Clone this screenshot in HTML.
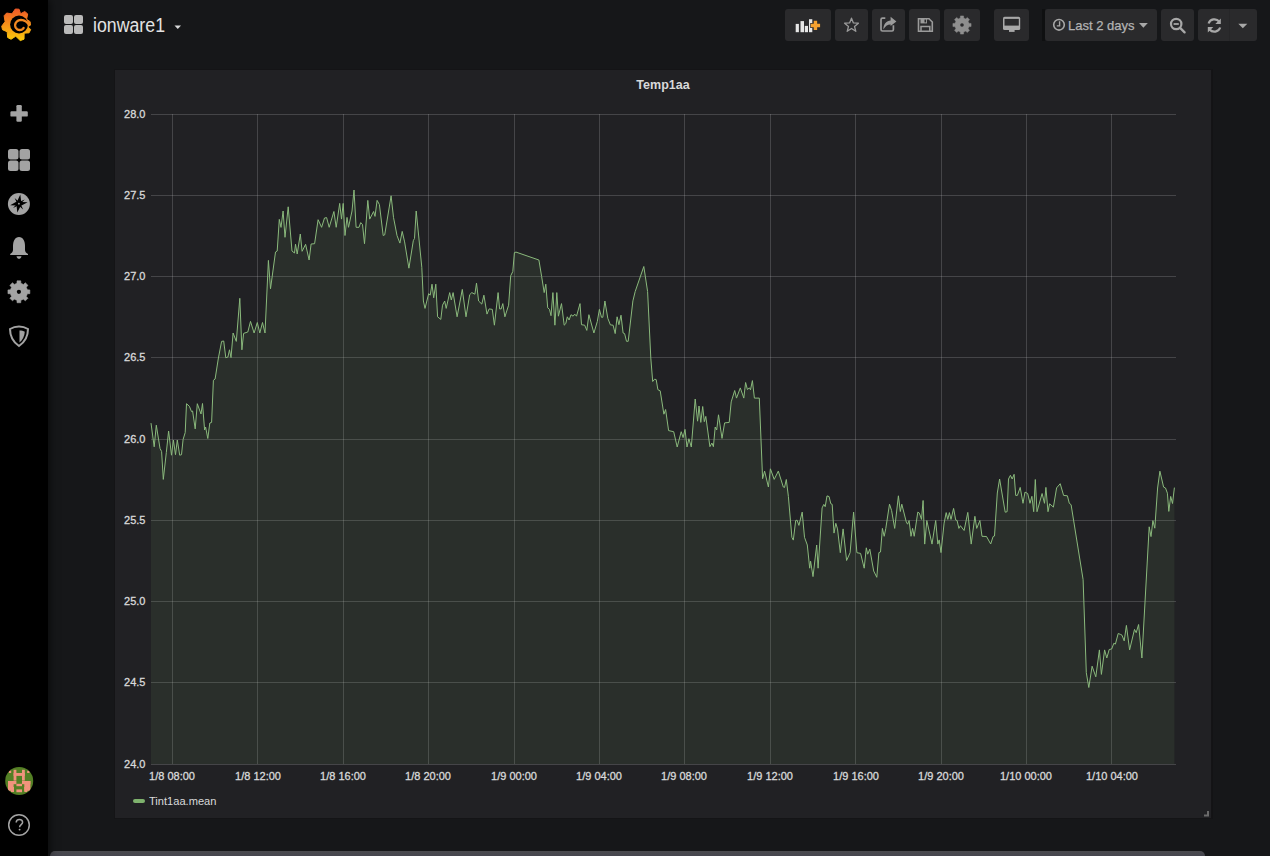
<!DOCTYPE html>
<html><head><meta charset="utf-8">
<style>
html,body{margin:0;padding:0;width:1270px;height:856px;overflow:hidden;background:#161719;font-family:"Liberation Sans",sans-serif;}
.abs{position:absolute;}
#side{position:absolute;left:0;top:0;width:48px;height:856px;background:#000;box-shadow:2px 0 8px rgba(0,0,0,.55);z-index:2;}
.btn{position:absolute;top:9px;height:32px;background:#2a2a2c;border-radius:3px;}
.ylab{position:absolute;width:40px;left:105.5px;-webkit-text-stroke:0.3px #d8d9da;text-align:right;font-size:11px;line-height:11px;color:#d8d9da;}
.xlab{position:absolute;width:100px;-webkit-text-stroke:0.3px #d8d9da;text-align:center;font-size:11px;line-height:11px;color:#d8d9da;white-space:nowrap;}
</style></head>
<body>
<!-- sidebar -->
<div id="side">
<svg width="48" height="856" viewBox="0 0 48 856" style="position:absolute;left:0;top:0">
  <defs>
    <linearGradient id="lg" x1="0" y1="0" x2="0" y2="1">
      <stop offset="0" stop-color="#f05a28"/>
      <stop offset="1" stop-color="#fbca0a"/>
    </linearGradient>
  </defs>
  <path d="M15.29 9.01 L19.09 9.23 L20.56 13.81 L24.76 11.47 L27.69 13.91 L26.59 19.24 L30.15 21.69 L30.44 25.13 L27.71 26.70 L30.70 29.48 L29.09 32.82 L24.15 33.14 L24.03 39.17 L20.28 40.60 L15.72 36.19 L11.05 39.25 L7.66 37.54 L7.20 31.79 L2.52 29.72 L1.69 26.23 L5.09 21.62 L4.13 15.72 L6.64 13.04 L11.99 13.83Z" fill="url(#lg)" stroke="url(#lg)" stroke-width="1" stroke-linejoin="round"/>
  <circle cx="19.0" cy="24.5" r="8.9" fill="#000"/>
  <path d="M28.51 24.18 L27.83 23.30 L27.12 22.55 L26.39 21.92 L25.64 21.38 L24.90 20.95 L24.16 20.60 L23.43 20.33 L22.71 20.15 L22.01 20.03 L21.33 19.98 L20.67 19.99 L20.03 20.06 L19.42 20.18 L18.84 20.36 L18.29 20.59 L17.78 20.86 L17.30 21.18 L16.86 21.54 L16.47 21.94 L16.12 22.37 L15.82 22.83 L15.58 23.32 L15.39 23.83 L15.25 24.35 L15.18 24.88 L15.16 25.42 L15.20 25.95 L15.31 26.48 L15.47 26.99 L15.68 27.48 L15.95 27.94 L16.27 28.36 L16.64 28.75 L17.05 29.09 L17.49 29.38 L17.97 29.62 L18.46 29.80 L18.98 29.93 L19.51 29.99 L20.04 29.99 L20.57 29.94 L21.09 29.82 L21.59 29.64 L22.07 29.40 L22.51 29.12 L22.92 28.78 L23.29 28.40 L23.61 27.97" fill="none" stroke="#f58a22" stroke-width="2.3" stroke-linecap="round"/>
  <!-- plus -->
  <rect x="16.4" y="105" width="5.4" height="16.8" rx="1.2" fill="#a3a3a3"/><rect x="10.4" y="111.2" width="17.4" height="5.4" rx="1.2" fill="#a3a3a3"/>
  <!-- dashboards -->
  <rect x="8" y="149" width="10.5" height="10.5" rx="2.5" fill="#a3a3a3"/>
  <rect x="19.5" y="149" width="10.5" height="10.5" rx="2.5" fill="#a3a3a3"/>
  <rect x="8" y="160.5" width="10.5" height="10.5" rx="2.5" fill="#a3a3a3"/>
  <rect x="19.5" y="160.5" width="10.5" height="10.5" rx="2.5" fill="#a3a3a3"/>
  <!-- compass -->
  <circle cx="18.9" cy="204" r="11" fill="#a3a3a3"/>
  <path d="M20.30 194.60 L21.24 201.99 L27.60 202.20 L20.61 206.04 L17.30 212.60 L16.56 205.41 L10.20 205.20 L17.19 201.36Z" fill="#000"/>
  <path d="M20.18 201.55 L24.71 199.44 L21.33 203.12 Z M21.05 204.98 L23.16 209.51 L19.48 206.13 Z M17.62 205.85 L13.09 207.96 L16.47 204.28 Z M16.75 202.42 L14.64 197.89 L18.32 201.27 Z " fill="#000"/>
  <circle cx="18.9" cy="203.7" r="0.9" fill="#a3a3a3"/>
  <!-- bell -->
  <path d="M19 237 C15 237 13 241 13 246 L13 250 C13 252 11.5 253 10.2 254 L10.2 255 L28 255 L28 254 C26.5 253 25 252 25 250 L25 246 C25 241 23 237 19 237 Z" fill="#a3a3a3"/>
  <path d="M16.5 256.2 L21.5 256.2 C21 258 20 258.8 19 258.8 C18 258.8 17 258 16.5 256.2 Z" fill="#a3a3a3"/>
  <!-- gear -->
  <path d="M16.94 283.32 L17.02 280.86 L20.78 280.86 L20.86 283.32 L23.51 284.42 L25.31 282.74 L27.96 285.39 L26.28 287.19 L27.38 289.84 L29.84 289.92 L29.84 293.68 L27.38 293.76 L26.28 296.41 L27.96 298.21 L25.31 300.86 L23.51 299.18 L20.86 300.28 L20.78 302.74 L17.02 302.74 L16.94 300.28 L14.29 299.18 L12.49 300.86 L9.84 298.21 L11.52 296.41 L10.42 293.76 L7.96 293.68 L7.96 289.92 L10.42 289.84 L11.52 287.19 L9.84 285.39 L12.49 282.74 L14.29 284.42Z" fill="#a3a3a3" stroke="#a3a3a3" stroke-width="0.6" stroke-linejoin="round"/>
  <circle cx="18.9" cy="291.8" r="2.1" fill="#000"/>
  <!-- shield -->
  <path d="M19 326.5 C15.5 326.5 12.5 327.5 10 329 C10 336 13 342 19 346 C25 342 28 336 28 329 C25.5 327.5 22.5 326.5 19 326.5 Z" fill="none" stroke="#a3a3a3" stroke-width="2"/>
  <path d="M19.5 330.5 C21.5 330.5 23.5 331 24.8 331.8 C24.5 336.5 22.5 340 19.5 342.5 Z" fill="#a3a3a3"/>
  <!-- avatar -->
  <circle cx="19.2" cy="781" r="14" fill="#537f24"/>
  <clipPath id="avc"><circle cx="19.2" cy="781" r="14"/></clipPath>
  <g fill="#f0937c" clip-path="url(#avc)">
    <rect x="13.6" y="769.8" width="2.8" height="10.8"/><rect x="22" y="769.8" width="2.8" height="10.8"/><rect x="13.6" y="773" width="11.2" height="2.9"/>
    <rect x="8.9" y="770.7" width="2.3" height="2.3"/><rect x="27.2" y="770.7" width="2.3" height="2.3"/>
    <rect x="8" y="781" width="5.6" height="9.8"/><rect x="8" y="781" width="8.4" height="3.2"/>
    <rect x="24.3" y="781" width="6.1" height="9.8"/><rect x="22" y="781" width="8.4" height="3.2"/>
    <rect x="16.4" y="783.8" width="5.6" height="2.4"/><rect x="16.4" y="789.4" width="5.6" height="2.8"/>
    <rect x="11" y="787" width="3" height="5"/><rect x="24.3" y="787" width="3" height="5"/>
  </g>
  <!-- help -->
  <circle cx="19" cy="825" r="10.3" fill="none" stroke="#a3a3a3" stroke-width="1.5"/>
  <path d="M16.2 822.6 C16.2 820.6 17.6 819.4 19.4 819.4 C21.2 819.4 22.6 820.6 22.6 822.3 C22.6 824.4 19.6 824.8 19.6 827.2" fill="none" stroke="#a3a3a3" stroke-width="1.5"/><circle cx="19.6" cy="829.6" r="0.95" fill="#a3a3a3"/>
</svg>
</div>

<!-- header -->
<svg class="abs" style="left:64px;top:15px" width="19" height="19" viewBox="0 0 19 19">
  <rect x="0" y="0" width="9" height="9" rx="2" fill="#bababa"/>
  <rect x="10" y="0" width="9" height="9" rx="2" fill="#bababa"/>
  <rect x="0" y="10" width="9" height="9" rx="2" fill="#bababa"/>
  <rect x="10" y="10" width="9" height="9" rx="2" fill="#bababa"/>
</svg>
<div class="abs" style="left:93px;top:15px;font-size:19.5px;line-height:20px;color:#e3e3e3;transform:scaleX(0.91);transform-origin:0 0;">ionware1</div>
<svg class="abs" style="left:174px;top:25px" width="8" height="5" viewBox="0 0 8 5"><path d="M0.5 0.5 H7 L3.75 4 Z" fill="#d8d9da"/></svg>

<div class="btn" style="left:785px;width:46px;">
  <svg class="abs" style="left:0;top:0" width="46" height="32" viewBox="0 0 46 32">
    <rect x="10.7" y="14.9" width="3.2" height="8.3" fill="#e6e6e6"/>
    <rect x="15.5" y="12.1" width="3.5" height="11.1" fill="#e6e6e6"/>
    <rect x="19.8" y="16.9" width="3.2" height="6.3" fill="#e6e6e6"/>
    <rect x="24" y="10.2" width="3.3" height="13" fill="#e6e6e6"/>
    <path d="M25.2 16.45 H35.6 M30.45 11.2 V21.7" stroke="#2a2a2c" stroke-width="5"/>
    <path d="M25.8 16.45 H35.1 M30.45 11.8 V21.1" stroke="#f5a130" stroke-width="3.4"/>
  </svg>
</div>
<div class="btn" style="left:835px;width:33px;">
  <svg class="abs" style="left:0;top:0" width="33" height="32" viewBox="0 0 33 32">
    <path d="M16.5 9.2 L18.4 13.9 L23.4 14.2 L19.5 17.4 L20.8 22.3 L16.5 19.5 L12.2 22.3 L13.5 17.4 L9.6 14.2 L14.6 13.9 Z" fill="none" stroke="#9b9b9b" stroke-width="1.3" stroke-linejoin="round"/>
  </svg>
</div>
<div class="btn" style="left:872px;width:33px;">
  <svg class="abs" style="left:0;top:0" width="33" height="32" viewBox="0 0 33 32">
    <path d="M13.3 9.2 H10.5 C9.5 9.2 9 9.7 9 10.7 V20.5 C9 21.5 9.5 22 10.5 22 H20 C21 22 21.4 21.5 21.4 20.5 V16.3" fill="none" stroke="#9b9b9b" stroke-width="1.7"/>
    <path d="M11.4 20.6 C11.4 15 14.6 11.7 18.6 11.5 V7.8 L24.4 12.4 L18.6 17 V15.4 C15.4 15.4 13 17.2 11.4 20.6 Z" fill="#9b9b9b"/>
  </svg>
</div>
<div class="btn" style="left:909px;width:31px;">
  <svg class="abs" style="left:0;top:0" width="31" height="32" viewBox="0 0 31 32">
    <path d="M9.5 9.8 H20 L23.3 13 V22.3 H9.5 Z" fill="none" stroke="#9b9b9b" stroke-width="1.6"/>
    <rect x="11.5" y="9.8" width="6.5" height="4.6" fill="#9b9b9b"/>
    <rect x="15.5" y="10.6" width="1.6" height="2.8" fill="#2a2a2c"/>
    <path d="M12 22 V17.5 H20.8 V22" fill="none" stroke="#9b9b9b" stroke-width="1.5"/>
  </svg>
</div>
<div class="btn" style="left:944px;width:36px;">
  <svg class="abs" style="left:0;top:0" width="36" height="32" viewBox="0 0 36 32">
    <path d="M16.38 8.98 L16.44 6.93 L19.56 6.93 L19.62 8.98 L21.82 9.89 L23.31 8.49 L25.51 10.69 L24.11 12.18 L25.02 14.38 L27.07 14.44 L27.07 17.56 L25.02 17.62 L24.11 19.82 L25.51 21.31 L23.31 23.51 L21.82 22.11 L19.62 23.02 L19.56 25.07 L16.44 25.07 L16.38 23.02 L14.18 22.11 L12.69 23.51 L10.49 21.31 L11.89 19.82 L10.98 17.62 L8.93 17.56 L8.93 14.44 L10.98 14.38 L11.89 12.18 L10.49 10.69 L12.69 8.49 L14.18 9.89Z" fill="#8e8e8e" stroke="#8e8e8e" stroke-width="0.5" stroke-linejoin="round"/><circle cx="18" cy="16" r="1.8" fill="#2a2a2c"/>
  </svg>
</div>
<div class="btn" style="left:994px;width:35px;">
  <svg class="abs" style="left:0;top:0" width="35" height="32" viewBox="0 0 35 32">
    <rect x="9" y="7.8" width="17.2" height="13.2" rx="1.6" fill="#a8a8a8"/>
    <rect x="10.5" y="9.9" width="14.3" height="6.7" fill="#2a2a2c"/>
    <rect x="15" y="20.5" width="5.6" height="2.4" fill="#a8a8a8"/>
  </svg>
</div>
<div class="abs" style="left:1042px;top:9px;width:3px;height:32px;background:#0f1011;"></div>
<div class="btn" style="left:1045px;width:112px;">
  <svg class="abs" style="left:0;top:0" width="112" height="32" viewBox="0 0 112 32">
    <circle cx="14" cy="15.8" r="5.3" fill="none" stroke="#a8a8a8" stroke-width="1.6"/>
    <path d="M14.6 12.3 V16.9 H11.8" fill="none" stroke="#a8a8a8" stroke-width="1.4"/>
    <path d="M94 14 H102.8 L98.4 18.7 Z" fill="#a8a8a8"/>
  </svg>
  <div class="abs" style="left:23px;top:10px;font-size:13px;line-height:14px;color:#b3b3b3;-webkit-text-stroke:0.25px #b3b3b3;">Last 2 days</div>
</div>
<div class="btn" style="left:1161px;width:33px;">
  <svg class="abs" style="left:0;top:0" width="33" height="32" viewBox="0 0 33 32">
    <circle cx="15.2" cy="15" r="5.2" fill="none" stroke="#a8a8a8" stroke-width="2.2"/>
    <path d="M12.6 15 H17.8" stroke="#a8a8a8" stroke-width="1.8"/>
    <path d="M19.1 18.9 L23.6 23.4" stroke="#a8a8a8" stroke-width="2.3" stroke-linecap="round"/>
  </svg>
</div>
<div class="btn" style="left:1198px;width:59px;">
  <div class="abs" style="left:31px;top:0;width:1px;height:32px;background:#262628;"></div>
  <svg class="abs" style="left:0;top:0" width="59" height="32" viewBox="0 0 59 32">
    <path d="M10.6 14.5 A6.2 6.2 0 0 1 21.2 12.5" fill="none" stroke="#a8a8a8" stroke-width="2.2"/>
    <path d="M22.8 9.5 V15 H17.3 Z" fill="#a8a8a8"/>
    <path d="M22.2 18.5 A6.2 6.2 0 0 1 11.6 20.5" fill="none" stroke="#a8a8a8" stroke-width="2.2"/>
    <path d="M9.8 23.5 V18 H15.3 Z" fill="#a8a8a8"/>
    <path d="M40.3 14.8 H49.3 L44.8 19.2 Z" fill="#a8a8a8"/>
  </svg>
</div>

<!-- panel -->
<div class="abs" style="left:114px;top:69px;width:1096px;height:748px;background:#212124;border:1px solid #141416;box-shadow:1px 0 0 #131315;"></div>
<div class="abs" style="left:563px;top:78px;width:200px;text-align:center;font-size:12.5px;line-height:14px;font-weight:bold;color:#d8d9da;">Temp1aa</div>

<svg class="abs" style="left:0;top:0" width="1270" height="856" viewBox="0 0 1270 856">
  <g fill="rgb(200,200,200)" fill-opacity="0.22">
    <rect x="151" y="114" width="1025" height="1"/>
    <rect x="151" y="195" width="1025" height="1"/>
    <rect x="151" y="276" width="1025" height="1"/>
    <rect x="151" y="357" width="1025" height="1"/>
    <rect x="151" y="439" width="1025" height="1"/>
    <rect x="151" y="520" width="1025" height="1"/>
    <rect x="151" y="601" width="1025" height="1"/>
    <rect x="151" y="682" width="1025" height="1"/>
    <rect x="151" y="764" width="1025" height="1"/>
    <rect x="172" y="114" width="1" height="650"/>
    <rect x="257" y="114" width="1" height="650"/>
    <rect x="343" y="114" width="1" height="650"/>
    <rect x="428" y="114" width="1" height="650"/>
    <rect x="514" y="114" width="1" height="650"/>
    <rect x="599" y="114" width="1" height="650"/>
    <rect x="684" y="114" width="1" height="650"/>
    <rect x="770" y="114" width="1" height="650"/>
    <rect x="855" y="114" width="1" height="650"/>
    <rect x="941" y="114" width="1" height="650"/>
    <rect x="1026" y="114" width="1" height="650"/>
    <rect x="1111" y="114" width="1" height="650"/>
  </g>
  <path d="M151 423.1 L154.2 446.8 L156.3 425.2 L160 448.4 L161.6 451.5 L163.3 479.4 L166.3 452.6 L168.6 431 L171.5 455.2 L173.4 440 L175.5 454.7 L177.3 440 L179.7 455.2 L181.5 454.7 L183.1 439.4 L185.2 432.6 L186.5 403.7 L189.4 406.3 L191.5 411.6 L192.6 411 L195.2 428.9 L197.3 403.7 L201 414 L202.5 403.5 L204.6 430 L205.6 427 L207.8 438.5 L209.8 423 L211.6 422.4 L213.4 380.3 L215.1 379 L218.4 358 L221.6 341.4 L223.7 341 L225.8 357.8 L227.9 357 L229.5 349.8 L231 357.6 L233.1 333 L236.3 341.4 L239.8 298.3 L241.9 349.8 L243.6 333.4 L247.8 332 L250.5 321.4 L254.1 333 L257.3 322.5 L259.8 333 L262.5 322.5 L265 333 L268.4 260.4 L270.5 288.8 L275.5 252 L277.2 251 L279.3 219.4 L281 227.4 L283.1 211 L285 237.3 L288.2 206.8 L292 251 L294.5 253 L295.5 244.2 L297.2 254 L300.3 234 L302.1 251.3 L305.6 244.3 L309.1 260 L311.1 244 L314.6 243.7 L318.1 219.7 L321.6 227.3 L324.5 218 L326.6 217.6 L329.2 227.3 L333.9 211.5 L336.2 227.3 L339.7 203.4 L341.5 219.1 L343.2 203.4 L345 235.5 L347 217.4 L348.5 227.3 L352 211 L354 190 L356.1 227.3 L359 227.3 L360.7 222.6 L362.5 224.4 L364.5 243.7 L367.8 200.4 L369.7 219.1 L373.6 211.5 L375 216.4 L377.1 200.4 L379.4 204.5 L383.2 235.5 L384.7 234.9 L391.1 195.8 L393.5 217.4 L397 235.5 L399.9 243.1 L402.2 231.4 L404.6 241.9 L408.9 268.2 L413.3 240.7 L414.5 238.4 L416.2 211 L421.8 267.3 L423.4 301 L425 308.4 L428.7 293.6 L430.2 295.2 L432 284.2 L433.7 297.8 L435.8 284.2 L437.6 316.8 L440.8 319.4 L442.5 305.2 L444.7 301 L446.2 308.4 L449.7 292.6 L451.3 300 L453.1 292.6 L457.1 316.8 L462.3 289.4 L466 316.8 L469.7 294.7 L471.8 292.6 L474.9 294.2 L476.5 283.1 L478.6 301 L481.8 304.1 L483.9 295.2 L487 314.1 L489.1 308.9 L492.3 309.4 L494.4 325.2 L498.1 292.6 L499.6 308.9 L501.2 308.9 L502.8 303.6 L504.9 316.8 L508.6 305.2 L510.7 275.8 L512.8 271.5 L514.4 252.6 L516 252.1 L538.9 260 L541.6 276.3 L544.2 292.6 L545.8 284.2 L547.7 307.8 L549.5 309.4 L551 315.7 L552.9 292.6 L554.9 325.2 L556.8 292.6 L558.4 316.2 L561.5 303.6 L564.2 325.2 L565.8 323.6 L567.3 316.8 L569.1 320 L571 314.7 L573.1 316.2 L574.7 314.1 L576.5 316.2 L580 303.6 L581.5 324.7 L584.7 325.2 L586.8 330.4 L588.9 314.7 L593.9 333 L597.3 321.5 L599.4 309.4 L601.5 317.3 L602.8 317.3 L604.9 301 L607.8 318.3 L610.4 324.9 L613.1 325.2 L615.2 333.6 L617.1 316.8 L618.9 324.7 L621 315.2 L623.1 333 L624.6 333.6 L626.5 341.3 L628.2 341.3 L632.9 300.9 L635.2 291.5 L643.8 266.5 L647.6 291.5 L650.8 358.1 L652.7 381.5 L654.6 379.2 L656.2 379.6 L657.9 389.7 L660.2 390.8 L663.9 414.2 L665.6 409.5 L668.6 430.6 L673.7 431.7 L677.2 447 L681.2 431.7 L683.1 437.6 L685 429.4 L687 447 L688.9 438.7 L691.3 447 L695.2 399 L697.6 421.2 L699 406 L700.8 422.4 L702.7 406.5 L704.3 421.7 L705.8 416.4 L709.9 446.7 L711.9 443 L713.4 446.7 L715.2 427 L716.7 430 L718.5 414.8 L722 438.4 L724.6 422.9 L729.2 422.4 L731.2 401.9 L734.7 390.5 L736.5 398.1 L740.3 387.9 L743.8 398.1 L745.6 382.5 L747.4 389.5 L749.4 387.9 L750.5 389.8 L752.4 380.6 L754.4 398.1 L759.3 398.1 L762.6 478.7 L764.6 471.1 L768.4 487 L770.4 468.8 L774.2 479.4 L778.3 471.1 L783.3 487 L784.5 487.5 L786.3 479.5 L788.4 496.6 L791.9 537.3 L793.3 540.1 L795.7 520.5 L797.1 520.2 L798.9 525.4 L802.2 512.1 L804.5 537.3 L807.3 545 L809.7 568.2 L810.6 561.2 L813 576.6 L816.7 545 L818.1 568.2 L822.1 507.9 L823.8 504.4 L825.2 506.7 L827 495.9 L829.1 496.6 L830.8 503.7 L832.2 504.4 L834 533.1 L835.8 523.3 L837.5 528.9 L840.3 552.7 L843.1 528.9 L846.6 560.5 L850.1 552.7 L853.6 512.1 L856.9 552.7 L860.6 553.4 L864.2 568.2 L866.3 547.8 L867.7 554.2 L869.8 549.2 L873.7 571 L876.8 577.3 L878.9 552.6 L880.5 552 L882.4 528.4 L884.2 536.3 L885.8 528.4 L889.5 504.2 L891.6 510.5 L894.7 528.4 L898.4 495.8 L900.3 511.5 L901.8 504.2 L906.3 522.1 L907.6 524.2 L909.1 520.5 L911 536.3 L912.6 528.4 L914.2 536.3 L917.8 512.1 L919.4 513.1 L921.5 519.4 L923.1 500.5 L924.7 544.1 L926.8 520.5 L932 544.1 L935.7 520.5 L937.8 544.1 L939.2 539.9 L941 552.6 L944.1 523.1 L946.2 512.6 L947.8 519.4 L949.4 512.6 L951 519.4 L953.6 508.4 L955.7 520 L957.1 520.5 L958.9 528.4 L960.4 525.7 L964.1 530.5 L967.8 512.4 L971.2 544.1 L974.9 516.3 L976.7 528.4 L979.9 520.5 L982 536.3 L986.5 536.5 L990.7 544 L993.1 536.5 L994.5 536 L997.3 493 L999.6 479 L1005.2 512.2 L1007.1 511.7 L1008.5 479 L1010.4 475.3 L1012.2 479 L1014.1 474.3 L1015.7 495.4 L1017.4 495.4 L1020.2 487.4 L1023 503.3 L1025 492.1 L1027.7 493.5 L1030 503.3 L1031.9 496.3 L1033.7 511.7 L1035.3 479.5 L1037 511.7 L1042.1 493.5 L1044.5 503.3 L1045.9 487.4 L1048 511.7 L1049.6 503.8 L1053.4 507.1 L1056.6 487.9 L1060.2 483.7 L1063.6 495.4 L1067.4 495.8 L1069.3 503.3 L1071.1 504.7 L1083.1 579.6 L1086.3 672.7 L1088.8 687.5 L1092.1 666.2 L1095.8 676.8 L1099.4 649.9 L1101.4 674.4 L1104.6 649.9 L1106.8 658 L1109.2 649.5 L1111.7 649 L1113.8 643.3 L1115.4 644.1 L1118.2 633.5 L1120.3 634.3 L1122 635.2 L1124.2 640.9 L1126.4 625.4 L1129.6 649.9 L1134.5 629.4 L1136.2 632.7 L1138.6 624.5 L1141.9 658 L1149.2 526.8 L1151 536.6 L1152.9 520.6 L1154.8 528.2 L1157.6 488 L1159.9 471.2 L1163.6 487.1 L1165.5 488 L1167.4 493.2 L1168.8 511.4 L1170.7 496.4 L1172.5 503.5 L1174.4 487.6 L1174.4 764 L151 764 Z" fill="#7eb26d" fill-opacity="0.1"/>
  <path d="M151 423.1 L154.2 446.8 L156.3 425.2 L160 448.4 L161.6 451.5 L163.3 479.4 L166.3 452.6 L168.6 431 L171.5 455.2 L173.4 440 L175.5 454.7 L177.3 440 L179.7 455.2 L181.5 454.7 L183.1 439.4 L185.2 432.6 L186.5 403.7 L189.4 406.3 L191.5 411.6 L192.6 411 L195.2 428.9 L197.3 403.7 L201 414 L202.5 403.5 L204.6 430 L205.6 427 L207.8 438.5 L209.8 423 L211.6 422.4 L213.4 380.3 L215.1 379 L218.4 358 L221.6 341.4 L223.7 341 L225.8 357.8 L227.9 357 L229.5 349.8 L231 357.6 L233.1 333 L236.3 341.4 L239.8 298.3 L241.9 349.8 L243.6 333.4 L247.8 332 L250.5 321.4 L254.1 333 L257.3 322.5 L259.8 333 L262.5 322.5 L265 333 L268.4 260.4 L270.5 288.8 L275.5 252 L277.2 251 L279.3 219.4 L281 227.4 L283.1 211 L285 237.3 L288.2 206.8 L292 251 L294.5 253 L295.5 244.2 L297.2 254 L300.3 234 L302.1 251.3 L305.6 244.3 L309.1 260 L311.1 244 L314.6 243.7 L318.1 219.7 L321.6 227.3 L324.5 218 L326.6 217.6 L329.2 227.3 L333.9 211.5 L336.2 227.3 L339.7 203.4 L341.5 219.1 L343.2 203.4 L345 235.5 L347 217.4 L348.5 227.3 L352 211 L354 190 L356.1 227.3 L359 227.3 L360.7 222.6 L362.5 224.4 L364.5 243.7 L367.8 200.4 L369.7 219.1 L373.6 211.5 L375 216.4 L377.1 200.4 L379.4 204.5 L383.2 235.5 L384.7 234.9 L391.1 195.8 L393.5 217.4 L397 235.5 L399.9 243.1 L402.2 231.4 L404.6 241.9 L408.9 268.2 L413.3 240.7 L414.5 238.4 L416.2 211 L421.8 267.3 L423.4 301 L425 308.4 L428.7 293.6 L430.2 295.2 L432 284.2 L433.7 297.8 L435.8 284.2 L437.6 316.8 L440.8 319.4 L442.5 305.2 L444.7 301 L446.2 308.4 L449.7 292.6 L451.3 300 L453.1 292.6 L457.1 316.8 L462.3 289.4 L466 316.8 L469.7 294.7 L471.8 292.6 L474.9 294.2 L476.5 283.1 L478.6 301 L481.8 304.1 L483.9 295.2 L487 314.1 L489.1 308.9 L492.3 309.4 L494.4 325.2 L498.1 292.6 L499.6 308.9 L501.2 308.9 L502.8 303.6 L504.9 316.8 L508.6 305.2 L510.7 275.8 L512.8 271.5 L514.4 252.6 L516 252.1 L538.9 260 L541.6 276.3 L544.2 292.6 L545.8 284.2 L547.7 307.8 L549.5 309.4 L551 315.7 L552.9 292.6 L554.9 325.2 L556.8 292.6 L558.4 316.2 L561.5 303.6 L564.2 325.2 L565.8 323.6 L567.3 316.8 L569.1 320 L571 314.7 L573.1 316.2 L574.7 314.1 L576.5 316.2 L580 303.6 L581.5 324.7 L584.7 325.2 L586.8 330.4 L588.9 314.7 L593.9 333 L597.3 321.5 L599.4 309.4 L601.5 317.3 L602.8 317.3 L604.9 301 L607.8 318.3 L610.4 324.9 L613.1 325.2 L615.2 333.6 L617.1 316.8 L618.9 324.7 L621 315.2 L623.1 333 L624.6 333.6 L626.5 341.3 L628.2 341.3 L632.9 300.9 L635.2 291.5 L643.8 266.5 L647.6 291.5 L650.8 358.1 L652.7 381.5 L654.6 379.2 L656.2 379.6 L657.9 389.7 L660.2 390.8 L663.9 414.2 L665.6 409.5 L668.6 430.6 L673.7 431.7 L677.2 447 L681.2 431.7 L683.1 437.6 L685 429.4 L687 447 L688.9 438.7 L691.3 447 L695.2 399 L697.6 421.2 L699 406 L700.8 422.4 L702.7 406.5 L704.3 421.7 L705.8 416.4 L709.9 446.7 L711.9 443 L713.4 446.7 L715.2 427 L716.7 430 L718.5 414.8 L722 438.4 L724.6 422.9 L729.2 422.4 L731.2 401.9 L734.7 390.5 L736.5 398.1 L740.3 387.9 L743.8 398.1 L745.6 382.5 L747.4 389.5 L749.4 387.9 L750.5 389.8 L752.4 380.6 L754.4 398.1 L759.3 398.1 L762.6 478.7 L764.6 471.1 L768.4 487 L770.4 468.8 L774.2 479.4 L778.3 471.1 L783.3 487 L784.5 487.5 L786.3 479.5 L788.4 496.6 L791.9 537.3 L793.3 540.1 L795.7 520.5 L797.1 520.2 L798.9 525.4 L802.2 512.1 L804.5 537.3 L807.3 545 L809.7 568.2 L810.6 561.2 L813 576.6 L816.7 545 L818.1 568.2 L822.1 507.9 L823.8 504.4 L825.2 506.7 L827 495.9 L829.1 496.6 L830.8 503.7 L832.2 504.4 L834 533.1 L835.8 523.3 L837.5 528.9 L840.3 552.7 L843.1 528.9 L846.6 560.5 L850.1 552.7 L853.6 512.1 L856.9 552.7 L860.6 553.4 L864.2 568.2 L866.3 547.8 L867.7 554.2 L869.8 549.2 L873.7 571 L876.8 577.3 L878.9 552.6 L880.5 552 L882.4 528.4 L884.2 536.3 L885.8 528.4 L889.5 504.2 L891.6 510.5 L894.7 528.4 L898.4 495.8 L900.3 511.5 L901.8 504.2 L906.3 522.1 L907.6 524.2 L909.1 520.5 L911 536.3 L912.6 528.4 L914.2 536.3 L917.8 512.1 L919.4 513.1 L921.5 519.4 L923.1 500.5 L924.7 544.1 L926.8 520.5 L932 544.1 L935.7 520.5 L937.8 544.1 L939.2 539.9 L941 552.6 L944.1 523.1 L946.2 512.6 L947.8 519.4 L949.4 512.6 L951 519.4 L953.6 508.4 L955.7 520 L957.1 520.5 L958.9 528.4 L960.4 525.7 L964.1 530.5 L967.8 512.4 L971.2 544.1 L974.9 516.3 L976.7 528.4 L979.9 520.5 L982 536.3 L986.5 536.5 L990.7 544 L993.1 536.5 L994.5 536 L997.3 493 L999.6 479 L1005.2 512.2 L1007.1 511.7 L1008.5 479 L1010.4 475.3 L1012.2 479 L1014.1 474.3 L1015.7 495.4 L1017.4 495.4 L1020.2 487.4 L1023 503.3 L1025 492.1 L1027.7 493.5 L1030 503.3 L1031.9 496.3 L1033.7 511.7 L1035.3 479.5 L1037 511.7 L1042.1 493.5 L1044.5 503.3 L1045.9 487.4 L1048 511.7 L1049.6 503.8 L1053.4 507.1 L1056.6 487.9 L1060.2 483.7 L1063.6 495.4 L1067.4 495.8 L1069.3 503.3 L1071.1 504.7 L1083.1 579.6 L1086.3 672.7 L1088.8 687.5 L1092.1 666.2 L1095.8 676.8 L1099.4 649.9 L1101.4 674.4 L1104.6 649.9 L1106.8 658 L1109.2 649.5 L1111.7 649 L1113.8 643.3 L1115.4 644.1 L1118.2 633.5 L1120.3 634.3 L1122 635.2 L1124.2 640.9 L1126.4 625.4 L1129.6 649.9 L1134.5 629.4 L1136.2 632.7 L1138.6 624.5 L1141.9 658 L1149.2 526.8 L1151 536.6 L1152.9 520.6 L1154.8 528.2 L1157.6 488 L1159.9 471.2 L1163.6 487.1 L1165.5 488 L1167.4 493.2 L1168.8 511.4 L1170.7 496.4 L1172.5 503.5 L1174.4 487.6" fill="none" stroke="#8ab97c" stroke-width="1" stroke-linejoin="miter"/>
  <path d="M1204 815.5 H1208 V811" fill="none" stroke="#6b6b6b" stroke-width="2"/>
</svg>

<div class="ylab" style="top:109px">28.0</div>
<div class="ylab" style="top:190px">27.5</div>
<div class="ylab" style="top:271px">27.0</div>
<div class="ylab" style="top:352px">26.5</div>
<div class="ylab" style="top:434px">26.0</div>
<div class="ylab" style="top:515px">25.5</div>
<div class="ylab" style="top:596px">25.0</div>
<div class="ylab" style="top:677px">24.5</div>
<div class="ylab" style="top:759px">24.0</div>

<div class="xlab" style="left:122px;top:771px">1/8 08:00</div>
<div class="xlab" style="left:208px;top:771px">1/8 12:00</div>
<div class="xlab" style="left:293px;top:771px">1/8 16:00</div>
<div class="xlab" style="left:378px;top:771px">1/8 20:00</div>
<div class="xlab" style="left:464px;top:771px">1/9 00:00</div>
<div class="xlab" style="left:549px;top:771px">1/9 04:00</div>
<div class="xlab" style="left:634px;top:771px">1/9 08:00</div>
<div class="xlab" style="left:720px;top:771px">1/9 12:00</div>
<div class="xlab" style="left:806px;top:771px">1/9 16:00</div>
<div class="xlab" style="left:891px;top:771px">1/9 20:00</div>
<div class="xlab" style="left:976px;top:771px">1/10 00:00</div>
<div class="xlab" style="left:1062px;top:771px">1/10 04:00</div>

<div class="abs" style="left:133px;top:799px;width:12px;height:4px;background:#7eb26d;border-radius:2px;"></div>
<div class="abs" style="left:149px;top:796px;font-size:11.5px;line-height:11px;color:#d8d9da;white-space:nowrap;transform:scaleX(0.965);transform-origin:0 0;">Tint1aa.mean</div>

<!-- scrollbar -->
<div class="abs" style="left:50px;top:851px;width:1155px;height:12px;border-radius:5px;background:linear-gradient(#4a4a4e,#404050);"></div>
</body></html>
